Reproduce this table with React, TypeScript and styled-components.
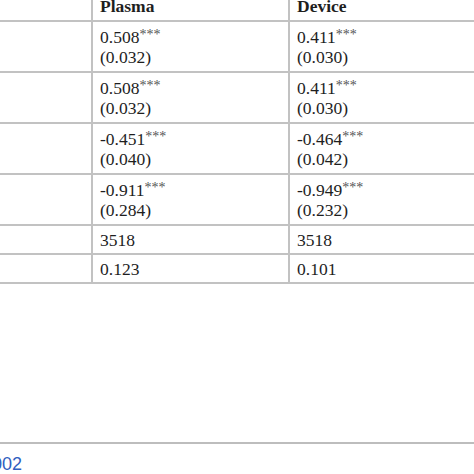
import React from "react";
import styled, { createGlobalStyle } from "styled-components";

type Row = { coef?: [string, string][]; plain?: [string, string] };

const ROWS: Row[] = [
	{ coef: [["0.508", "(0.032)"], ["0.411", "(0.030)"]] },
	{ coef: [["0.508", "(0.032)"], ["0.411", "(0.030)"]] },
	{ coef: [["-0.451", "(0.040)"], ["-0.464", "(0.042)"]] },
	{ coef: [["-0.911", "(0.284)"], ["-0.949", "(0.232)"]] },
	{ plain: ["3518", "3518"] },
	{ plain: ["0.123", "0.101"] },
];

const GlobalStyle = createGlobalStyle`
	html, body {
		margin: 0;
		padding: 0;
		background: #ffffff;
		overflow: hidden;
	}
`;

export default function App() {
	return (
		<>
			<GlobalStyle />
			<Page>
				<Table>
					<colgroup>
						<col style={{ width: 92 }} />
						<col style={{ width: 197 }} />
						<col style={{ width: 220 }} />
					</colgroup>
					<thead>
						<tr>
							<Th />
							<Th>Plasma</Th>
							<Th>Device</Th>
						</tr>
					</thead>
					<tbody>
						{ROWS.map((row, i) => (
							<tr key={i}>
								<Td $single={!row.coef} />
								{row.coef
									? row.coef.map(([c, se], j) => (
											<Td key={j}>
												{c}
												<Stars>***</Stars>
												<br />
												{se}
											</Td>
										))
									: row.plain!.map((v, j) => (
											<Td key={j} $single>
												{v}
											</Td>
										))}
							</tr>
						))}
					</tbody>
				</Table>
				<Footer>
					<LinkBox>
						<DoiLink href="#">https://doi.org/10.1371/journal.pone.0000002</DoiLink>
					</LinkBox>
				</Footer>
			</Page>
		</>
	);
}

const Page = styled.div`
	width: 474px;
	height: 483px;
	overflow: hidden;
	display: flex;
	flex-direction: column;
	/* the table's top is scrolled out of view in the reference */
	margin-top: -9px;
	font-family: "Liberation Serif", "Times New Roman", serif;
	color: #1e1e1e;
`;

const Table = styled.table`
	border-collapse: collapse;
	table-layout: fixed;
	width: 509px;
	font-size: 17.5px;
	line-height: 20px;
`;

const Th = styled.th`
	height: 29px;
	padding: 5px 8px 4px 7px;
	box-sizing: border-box;
	border: 2px solid #c2c2c2;
	border-top: none;
	border-left: none;
	text-align: left;
	font-weight: 700;
	vertical-align: top;
	&:not(:first-child) {
		border-left: 2px solid #c2c2c2;
	}
`;

const Td = styled.td<{ $single?: boolean }>`
	padding: ${(p) => (p.$single ? "4px 8px 3px 7px" : "5px 8px 4px 7px")};
	border: 2px solid #c2c2c2;
	border-left: none;
	vertical-align: top;
	text-align: left;
	&:not(:first-child) {
		border-left: 2px solid #c2c2c2;
	}
`;

const Stars = styled.sup`
	font-size: 14px;
	line-height: 0;
	vertical-align: 4px;
	color: #555;
`;

const Footer = styled.div`
	margin-top: auto;
	height: 32px;
	border-top: 2px solid #bdbdbd;
	padding-top: 10px;
	box-sizing: border-box;
`;

const LinkBox = styled.div`
	width: 22px;
	display: flex;
	justify-content: flex-end;
	white-space: nowrap;
`;

const DoiLink = styled.a`
	font-family: "Liberation Sans", Arial, sans-serif;
	font-size: 18px;
	line-height: 20px;
	color: #3060c0;
	text-decoration: none;
`;
